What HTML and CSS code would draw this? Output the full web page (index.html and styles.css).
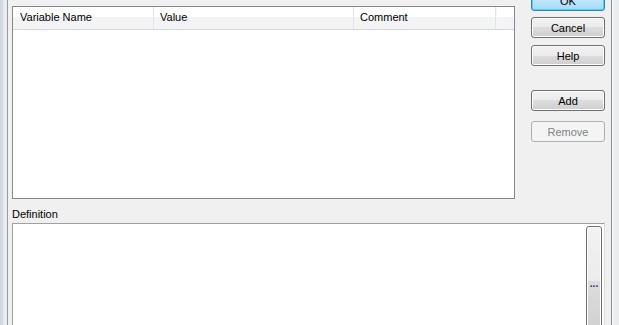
FILE: index.html
```html
<!doctype html>
<html lang="en">
<head>
	<meta charset="UTF-8">
	<title>Variables</title>
	<link rel="stylesheet" href="styles.css">
</head>
<body>
	<div class="screen">
		<div class="frame-left"></div>
		<div class="dialog">
			<div class="top-row">
				<div class="list">
					<div class="list-head">
						<div class="col col-name">Variable Name</div>
						<div class="col col-value">Value</div>
						<div class="col col-comment">Comment</div>
						<div class="col col-rest"></div>
					</div>
					<div class="list-body"></div>
				</div>
				<div class="buttons">
					<button class="btn btn-default">OK</button>
					<button class="btn btn-cancel">Cancel</button>
					<button class="btn btn-help">Help</button>
					<button class="btn btn-add">Add</button>
					<button class="btn btn-remove" disabled>Remove</button>
				</div>
			</div>
			<div class="def-label">Definition</div>
			<div class="def-box">
				<button class="btn btn-more">...</button>
			</div>
		</div>
		<div class="frame-right"></div>
	</div>
</body>
</html>
```

FILE: styles.css
```css
*, html, body {
	margin: 0;
	padding: 0;
}

body {
	width: 619px;
	height: 325px;
	overflow: hidden;
	background: #eceef1;
	font-family: "Liberation Sans", Arial, sans-serif;
	font-size: 11px;
	color: #000;
}

.screen {
	display: flex;
	height: 325px;
}

.frame-left {
	width: 7px;
	background: linear-gradient(to right, #d3d9e1 0, #d3d9e1 3px, #e8ebef 3px);
}

.dialog {
	width: 599px;
	background: #f0f0f0;
	border-left: 1px solid #9a9a9a;
	border-right: 1px solid #8e8e8e;
	padding: 6px 0 0 4px;
}

.frame-right {
	flex: 1;
	background: linear-gradient(to right, #f6f6f7 0, #f6f6f7 2px, #eaedf0 2px);
}

.top-row {
	display: flex;
	align-items: flex-start;
}

/* list view */
.list {
	width: 501px;
	height: 191px;
	border: 1px solid #828790;
	background: #fff;
	display: flex;
	flex-direction: column;
}

.list-head {
	display: flex;
	height: 22px;
	border-bottom: 1px solid #d5d5d5;
	background: linear-gradient(#fff 0, #fff 45%, #f3f4f6 45%, #f3f4f6 100%);
}

.col {
	height: 22px;
	line-height: 21px;
	border-right: 1px solid #e3e4e6;
	padding-left: 6px;
	box-sizing: border-box;
	white-space: nowrap;
}

.col-name {
	width: 141px;
	padding-left: 7px;
}

.col-value {
	width: 200px;
}

.col-comment {
	width: 142px;
}

.col-rest {
	flex: 1;
	border-right: none;
	border-left: 1px solid #f7f7f7;
}

.list-body {
	flex: 1;
}

/* buttons */
.buttons {
	display: flex;
	flex-direction: column;
	width: 74px;
	margin-left: 16px;
	margin-top: -16px;
}

.btn {
	height: 21px;
	border: 1px solid #707070;
	border-radius: 3px;
	background: linear-gradient(#f2f2f2 0, #ebebeb 50%, #dddddd 50%, #cfcfcf 100%);
	font-family: "Liberation Sans", Arial, sans-serif;
	font-size: 11px;
	color: #000;
	box-shadow: inset 0 0 0 1px #fcfcfc;
}

.btn-default {
	border-color: #3c7fb1;
	box-shadow: inset 0 0 0 1px #48d3ff;
	background: linear-gradient(#eaf6fd 0, #d9f0fc 50%, #bee6fd 50%, #a7d9f5 100%);
}

.btn-cancel {
	margin-top: 6px;
}

.btn-help {
	margin-top: 7px;
}

.btn-add {
	margin-top: 24px;
}

.btn-remove {
	margin-top: 10px;
	border-color: #adb2b5;
	background: #f4f4f4;
	color: #838383;
	box-shadow: none;
}

/* definition */
.def-label {
	margin-top: 9px;
	height: 13px;
	line-height: 13px;
	margin-bottom: 2px;
}

.def-box {
	width: 587px;
	height: 128px;
	border: 1px solid #a0a0a0;
	border-right-color: #dcdcdc;
	background: #fff;
	padding: 2px;
	display: flex;
	justify-content: flex-end;
	align-items: flex-start;
}

.btn-more {
	width: 16px;
	height: 110px;
	line-height: 8px;
	padding-top: 6px;
	color: #2a2a80;
	font-weight: bold;
	font-size: 10px;
}
```
